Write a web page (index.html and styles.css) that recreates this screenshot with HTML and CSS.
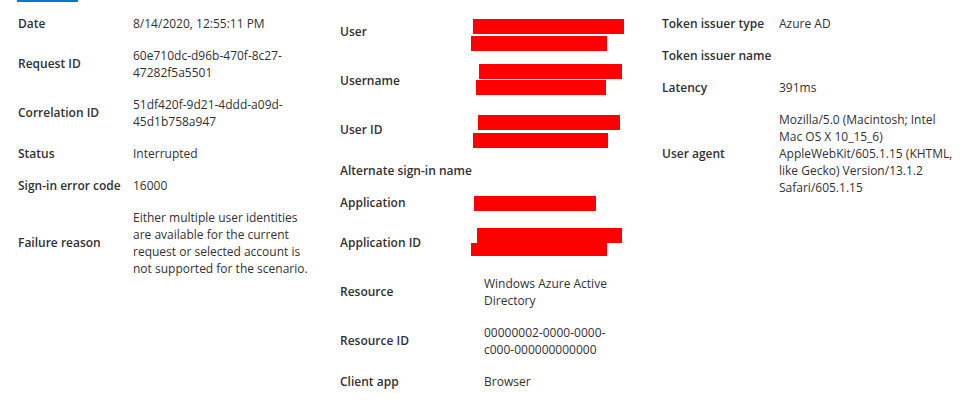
FILE: index.html
```html
<!DOCTYPE html>
<html lang="en">
<head>
<meta charset="utf-8">
<title>Sign-in details</title>
<link rel="stylesheet" href="styles.css">
</head>
<body>
<div class="tabbar"><span class="tab-indicator"></span></div>
<div class="details">
  <div class="col col-1">
    <div class="label">Date</div><div class="value">8/14/2020, 12:55:11 PM</div>
    <div class="label">Request ID</div><div class="value">60e710dc-d96b-470f-8c27-47282f5a5501</div>
    <div class="label">Correlation ID</div><div class="value">51df420f-9d21-4ddd-a09d-45d1b758a947</div>
    <div class="label">Status</div><div class="value">Interrupted</div>
    <div class="label">Sign-in error code</div><div class="value">16000</div>
    <div class="label">Failure reason</div><div class="value">Either multiple user identities are available for the current request or selected account is not supported for the scenario.</div>
  </div>
  <div class="col col-2">
    <div class="label">User</div>
    <div class="value redacted"><a class="link" href="#">User name</a><br><a class="link" href="#">contoso.com</a><span class="mask m-user-1"></span><span class="mask m-user-2"></span></div>
    <div class="label">Username</div>
    <div class="value redacted">user@<br>contoso.com<span class="mask m-uname-1"></span><span class="mask m-uname-2"></span></div>
    <div class="label">User ID</div>
    <div class="value redacted">0000-<br>0000<span class="mask m-uid-1"></span><span class="mask m-uid-2"></span></div>
    <div class="label">Alternate sign-in name</div><div class="value"></div>
    <div class="label">Application</div>
    <div class="value redacted">App<span class="mask m-app"></span></div>
    <div class="label">Application ID</div>
    <div class="value redacted">0000-<br>0000<span class="mask m-appid-1"></span><span class="mask m-appid-2"></span></div>
    <div class="label">Resource</div><div class="value">Windows Azure Active Directory</div>
    <div class="label">Resource ID</div><div class="value">00000002-0000-0000-c000-000000000000</div>
    <div class="label">Client app</div><div class="value">Browser</div>
  </div>
  <div class="col col-3">
    <div class="label">Token issuer type</div><div class="value">Azure AD</div>
    <div class="label">Token issuer name</div><div class="value"></div>
    <div class="label">Latency</div><div class="value">391ms</div>
    <div class="label">User agent</div><div class="value">Mozilla/5.0 (Macintosh; Intel Mac OS X 10_15_6) AppleWebKit/605.1.15 (KHTML, like Gecko) Version/13.1.2 Safari/605.1.15</div>
  </div>
</div>
</body>
</html>
```
FILE: styles.css
```css
html, body {
  margin: 0;
  padding: 0;
  background: #ffffff;
}
body {
  font-family: "Open Sans", "Noto Sans", "Liberation Sans", sans-serif;
  font-size: 12px;
  line-height: 17px;
  color: #323130;
}
.tabbar {
  height: 2px;
  padding-left: 17px;
}
.tab-indicator {
  display: block;
  width: 61px;
  height: 2px;
  background: #0078d4;
}
.details {
  display: grid;
  grid-template-columns: 322px 322px 314px;
  padding: 5px 0 0 18px;
  align-items: start;
}
.col {
  display: grid;
  align-items: center;
}
.col-1 { grid-template-columns: 115px 175px; }
.col-2 { grid-template-columns: 144px 135px; }
.col-3 { grid-template-columns: 117px 178px; }
.label {
  font-weight: 600;
  padding: 7.5px 0;
  white-space: nowrap;
}
.value {
  padding: 7.5px 0;
  min-height: 17px;
  overflow-wrap: break-word;
}
.redacted {
  position: relative;
}
.link {
  color: #0078d4;
  text-decoration: none;
}
.mask {
  position: absolute;
  background: #ff0000;
  height: 15px;
}
.m-user-1 { top: 12px; left: -11px; width: 151px; }
.m-user-2 { top: 29px; left: -13px; width: 136px; }
.m-uname-1 { top: 8px; left: -5px; width: 143px; }
.m-uname-2 { top: 24px; left: -8px; width: 130px; }
.m-uid-1 { top: 10px; left: -6px; width: 142px; }
.m-uid-2 { top: 28px; left: -11px; width: 135px; }
.m-app { top: 10px; left: -10px; width: 122px; }
.m-appid-1 { top: 10px; left: -7px; width: 145px; }
.m-appid-2 { top: 25px; left: -13px; width: 136px; height: 13px; }
```
